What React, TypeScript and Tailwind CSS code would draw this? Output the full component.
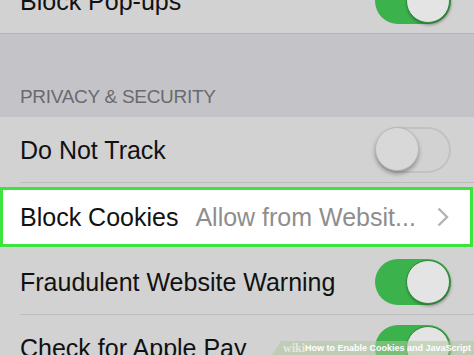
import React from "react";

const font = { fontFamily: '"Liberation Sans", Arial, sans-serif' };

function Toggle({ on }: { on: boolean }) {
  if (on) {
    return (
      <div className="relative w-[76px] h-[46px] rounded-full bg-[#3bb24b] shrink-0">
        <div className="absolute right-[1px] top-[1px] w-[44px] h-[44px] rounded-full bg-[#e4e4e4] border border-[#2f8a3c] shadow-[1px_2px_3px_rgba(0,0,0,0.35)]" />
      </div>
    );
  }
  return (
    <div className="relative w-[76px] h-[46px] rounded-full border-2 border-[#c2c2c2] bg-[#d2d2d2] shrink-0">
      <div className="absolute left-[-2px] top-[-2px] w-[44px] h-[44px] rounded-full bg-[#d8d8d8] border border-[#b8b8b8] shadow-[0_3px_4px_rgba(0,0,0,0.3)]" />
    </div>
  );
}

function Row({
  label,
  right,
  sep = "inset",
}: {
  label: string;
  right: React.ReactNode;
  sep?: "inset" | "full" | "none";
}) {
  return (
    <div className="relative h-[66px] bg-[#d2d2d2] flex items-center pl-5 pr-[23px] justify-between shrink-0">
      <span className="text-[25px] text-[#111] leading-[29px]">{label}</span>
      {right}
      {sep === "inset" && (
        <div className="absolute left-5 right-0 bottom-0 h-px bg-[#bcbcbc]" />
      )}
      {sep === "full" && (
        <div className="absolute left-0 right-0 bottom-0 h-px bg-[#b4b4b6]" />
      )}
    </div>
  );
}

export default function App() {
  return (
    <div
      className="relative w-[474px] h-[355px] overflow-hidden bg-[#d2d2d2]"
      style={font}
    >
      <div className="flex flex-col -mt-[32px]">
        <Row label="Block Pop-ups" right={<Toggle on />} sep="full" />
        <div className="h-[83px] bg-[#c4c3c8] flex items-end pl-5 pb-[9px] shrink-0">
          <span className="text-[19px] leading-[22px] tracking-[-0.3px] text-[#6a6a6e]">
            PRIVACY &amp; SECURITY
          </span>
        </div>
        <Row label="Do Not Track" right={<Toggle on={false} />} />
        <div className="h-[66px] bg-[#d2d2d2] pt-[4px] pb-[2px] pr-[1px] flex shrink-0">
          <div className="flex-1 bg-white border-[3px] border-[#3de43d] flex items-center pl-[17px] pr-[21px]">
            <span className="text-[25px] text-[#111] leading-[29px]">Block Cookies</span>
            <span className="ml-[17px] text-[25px] text-[#8e8e8e] leading-[29px] flex-1 whitespace-nowrap">
              Allow from Websit...
            </span>
            <svg width="12" height="20" viewBox="0 0 12 20" className="shrink-0">
              <path d="M1.5 1.5 L10 10 L1.5 18.5" fill="none" stroke="#b3b3b3" strokeWidth="2.4" />
            </svg>
          </div>
        </div>
        <Row label="Fraudulent Website Warning" right={<Toggle on />} />
        <Row label="Check for Apple Pay" right={<Toggle on />} sep="none" />
      </div>
      <div className="absolute bottom-0 right-0 h-[14px] w-[202px] bg-[rgba(175,200,160,0.55)] [clip-path:polygon(9px_0,100%_0,100%_100%,0_100%)] flex items-center pl-[11px] whitespace-nowrap">
        <span
          className="text-[12px] font-bold text-[#e6e8e0] leading-none"
          style={{ fontFamily: '"Liberation Serif", serif' }}
        >
          wiki
        </span>
        <span className="text-[9px] font-bold text-white leading-none">
          How to Enable Cookies and JavaScript
        </span>
      </div>
    </div>
  );
}
